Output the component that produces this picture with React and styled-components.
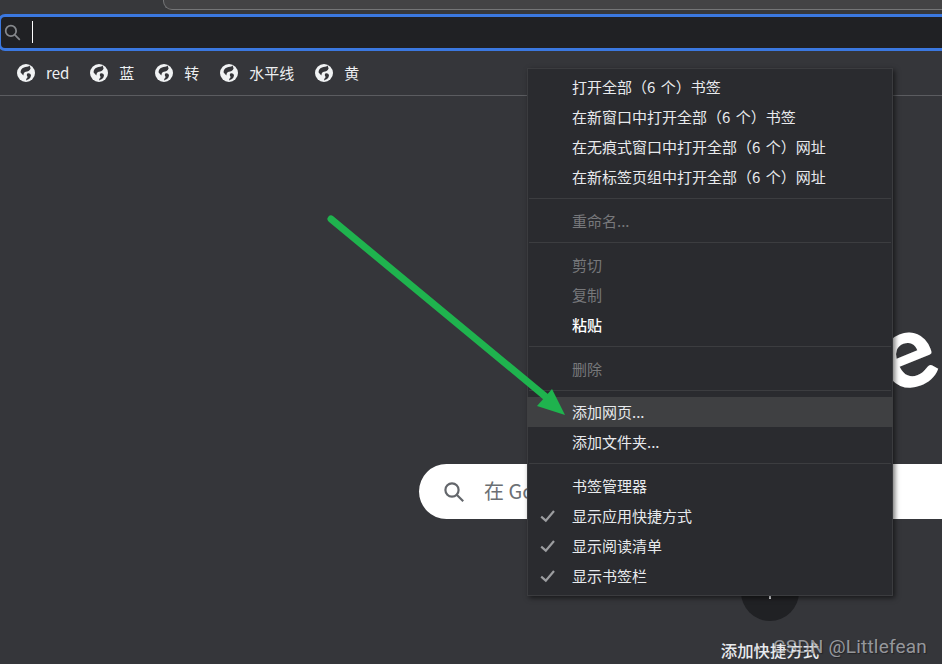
import React from "react";
import styled, { createGlobalStyle } from "styled-components";

const Global = createGlobalStyle`
  html, body { margin: 0; padding: 0; background: #35363a; }
  * { box-sizing: border-box; }
`;

const FONT = `"Noto Sans CJK SC", "Liberation Sans", sans-serif`;

const Page = styled.div`
  position: relative;
  width: 942px;
  height: 664px;
  overflow: hidden;
  background: #35363a;
  font-family: ${FONT};
  display: flex;
  flex-direction: column;
`;
const TabStrip = styled.div`
  height: 14px;
  flex: none;
  padding-left: 163px;
  background: #37383b;
`;
const ActiveTab = styled.div`
  height: 10px;
  width: 900px;
  background: #434345;
  border-left: 1px solid #747577;
  border-bottom: 1px solid #747577;
  border-bottom-left-radius: 9px;
`;
const Omnibox = styled.div`
  height: 37px;
  flex: none;
  margin: 0 -12px 0 -2px;
  padding-left: 2px;
  display: flex;
  align-items: center;
  background: #202124;
  border: 3px solid #3b78e0;
  border-radius: 7px;
`;
const Caret = styled.div`
  width: 1px;
  height: 22px;
  margin: -1px 0 0 10px;
  background: #ffffff;
`;
const BookmarkBar = styled.div`
  height: 45px;
  flex: none;
  padding: 0 0 1px 17px;
  display: flex;
  align-items: center;
  gap: 21px;
  border-bottom: 1px solid #5b5c60;
`;
const Bookmark = styled.div`
  display: flex;
  align-items: center;
  gap: 11px;
  color: #eef0f2;
  font-size: 15px;
  line-height: 18px;
`;
const Main = styled.main`
  flex: 1;
  display: flex;
  flex-direction: column;
`;
const LogoRow = styled.div`
  height: 148px;
  margin-top: 220px;
  display: flex;
  justify-content: flex-end;
`;
const LogoLetter = styled.span`
  display: block;
  margin: -23px -2px 0 0;
  color: #ffffff;
  font-family: "Lato", "Liberation Sans", sans-serif;
  font-size: 104px;
  font-weight: 900;
  line-height: 106px;
  transform: rotate(-22deg);
`;
const SearchBox = styled.div`
  flex: none;
  width: 720px;
  height: 55px;
  margin-left: 419px;
  padding: 0 0 2px 23px;
  display: flex;
  align-items: center;
  gap: 18px;
  background: #ffffff;
  border-radius: 28px;
  color: #6b6f74;
  font-size: 20px;
`;
const SearchIcon = styled.span`
  display: flex;
  margin-top: 2px;
`;
const Shortcut = styled.div`
  flex: none;
  width: 112px;
  margin: 44px 0 0 714px;
  display: flex;
  flex-direction: column;
  align-items: center;
  gap: 19px;
`;
const ShortcutDisc = styled.div`
  width: 58px;
  height: 58px;
  border-radius: 50%;
  background: #202124;
  display: flex;
  align-items: center;
  justify-content: center;
`;
const ShortcutLabel = styled.div`
  color: #e8eaed;
  font-size: 16.4px;
  font-weight: 500;
  line-height: 20px;
  white-space: nowrap;
`;
const Menu = styled.div`
  position: absolute;
  left: 527px;
  top: 68px;
  width: 366px;
  padding: 3px 0 4px;
  background: #2a2b2f;
  border: 1px solid #3b3c3f;
  box-shadow: 2px 2px 5px rgba(0, 0, 0, 0.55);
`;
const MenuItem = styled.div`
  height: 30px;
  padding-bottom: 2px;
  display: flex;
  align-items: center;
  font-size: 15px;
  word-spacing: 2px;
  color: ${(p) => (p.$disabled ? "#77787b" : p.$strong ? "#ffffff" : "#e8eaed")};
  font-weight: ${(p) => (p.$strong ? 500 : 400)};
  background: ${(p) => (p.$active ? "#3f4042" : "transparent")};
  margin: 0 ${(p) => (p.$active ? "-1px" : "0")};
  padding-left: ${(p) => (p.$active ? "13px" : "12px")};
  white-space: pre;
`;
const CheckSlot = styled.span`
  flex: none;
  width: 32px;
  height: 16px;
  margin-top: 2px;
  display: flex;
  align-items: center;
`;
const Separator = styled.div`
  height: 1px;
  margin: 6px 1px ${(p) => (p.$tight ? 6 : 7)}px;
  background: #3c3d40;
`;
const ArrowLayer = styled.svg`
  position: absolute;
  left: 0;
  top: 0;
  pointer-events: none;
`;
const Watermark = styled.div`
  position: absolute;
  right: 15px;
  top: 635px;
  color: rgba(220, 222, 225, 0.62);
  font-family: "Roboto", "Liberation Sans", sans-serif;
  font-size: 19px;
  line-height: 24px;
  letter-spacing: 0.2px;
  text-shadow: 1px 1px 1px rgba(0, 0, 0, 0.35);
`;

const Globe = () => (
  <svg width="18" height="18" viewBox="0 0 18 18">
    <circle cx="9" cy="9" r="9" fill="#f1f3f4" />
    <path
      d="M12.6 1.6C11 3.2 9 3 7 3.4 4.6 4 3.4 6.2 3.6 8.6L6.4 11.6C6.6 9.4 7 8.2 8.8 7.8 10.6 7.4 12.8 6.8 13.6 4.4Z"
      fill="#35363a"
    />
    <path
      d="M10.4 9.4C12 8.8 13.8 9.8 14 11.4L13.4 13.6C12.4 15 11 15.8 9 16.4 9.2 15 9.8 13.8 10.8 13 9.8 12 9.4 10.4 10.4 9.4Z"
      fill="#35363a"
    />
  </svg>
);

const Magnifier = ({ size, color, sw }) => (
  <svg width={size} height={size} viewBox="0 0 24 24" fill="none">
    <circle cx="10" cy="10" r="6.6" stroke={color} strokeWidth={sw} />
    <path d="M15 15l6.2 6.2" stroke={color} strokeWidth={sw} />
  </svg>
);

const Check = () => (
  <svg width="16" height="16" viewBox="0 0 16 16" fill="none">
    <path d="M1.2 8.6L5.8 12.6 14 3" stroke="#9c9da0" strokeWidth="2.2" />
  </svg>
);

const bookmarks = ["red", "蓝", "转", "水平线", "黄"];

const menu = [
  [
    { t: "打开全部（6 个）书签" },
    { t: "在新窗口中打开全部（6 个）书签" },
    { t: "在无痕式窗口中打开全部（6 个）网址" },
    { t: "在新标签页组中打开全部（6 个）网址" },
  ],
  [{ t: "重命名...", d: true }],
  [{ t: "剪切", d: true }, { t: "复制", d: true }, { t: "粘贴", s: true }],
  [{ t: "删除", d: true }],
  [{ t: "添加网页...", a: true }, { t: "添加文件夹..." }],
  [
    { t: "书签管理器" },
    { t: "显示应用快捷方式", c: true },
    { t: "显示阅读清单", c: true },
    { t: "显示书签栏", c: true },
  ],
];

export default function App() {
  return (
    <Page>
      <Global />
      <TabStrip>
        <ActiveTab />
      </TabStrip>
      <Omnibox>
        <Magnifier size={19} color="#85888c" sw={2.2} />
        <Caret />
      </Omnibox>
      <BookmarkBar>
        {bookmarks.map((b) => (
          <Bookmark key={b}>
            <Globe />
            {b}
          </Bookmark>
        ))}
      </BookmarkBar>
      <Main>
        <LogoRow>
          <LogoLetter>e</LogoLetter>
        </LogoRow>
        <SearchBox>
          <SearchIcon>
            <Magnifier size={24} color="#63666b" sw={2.2} />
          </SearchIcon>
          在 Google 中搜索，或输入网址
        </SearchBox>
        <Shortcut>
          <ShortcutDisc>
            <svg width="14" height="14" viewBox="0 0 14 14">
              <path d="M7 0v14M0 7h14" stroke="#e8eaed" strokeWidth="2" />
            </svg>
          </ShortcutDisc>
          <ShortcutLabel>添加快捷方式</ShortcutLabel>
        </Shortcut>
      </Main>
      <Menu>
        {menu.map((group, i) => (
          <React.Fragment key={i}>
            {i > 0 && <Separator $tight={i === 4} />}
            {group.map((it) => (
              <MenuItem key={it.t} $disabled={it.d} $strong={it.s} $active={it.a}>
                <CheckSlot>{it.c && <Check />}</CheckSlot>
                {it.t}
              </MenuItem>
            ))}
          </React.Fragment>
        ))}
      </Menu>
      <ArrowLayer width="942" height="664" viewBox="0 0 942 664">
        <path d="M331 219L552 402" stroke="#1fb34e" strokeWidth="7" strokeLinecap="round" />
        <path d="M552 389L565 415 537 406Z" fill="#1fb34e" />
      </ArrowLayer>
      <Watermark>CSDN @Littlefean</Watermark>
    </Page>
  );
}
